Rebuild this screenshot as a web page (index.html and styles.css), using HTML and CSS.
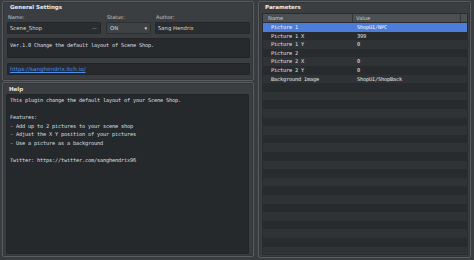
FILE: index.html
```html
<!DOCTYPE html>
<html>
<head>
<meta charset="utf-8">
<link rel="stylesheet" href="styles.css">
</head>
<body>
<div class="app">
  <div class="left">
    <section class="panel general">
      <div class="title">General Settings</div>
      <div class="fields">
        <div class="field f-name">
          <div class="label">Name:</div>
          <div class="input"><span>Scene_Shop</span><span class="dash">—</span></div>
        </div>
        <div class="field f-status">
          <div class="label">Status:</div>
          <div class="select"><span>ON</span><span class="arrow">▾</span></div>
        </div>
        <div class="field f-author">
          <div class="label">Author:</div>
          <div class="input"><span>Sang Hendrix</span></div>
        </div>
      </div>
      <div class="desc mono">Ver.1.0 Change the default layout of Scene Shop.</div>
      <div class="url"><a>https://sanghendrix.itch.io/</a></div>
    </section>
    <section class="panel help">
      <div class="title">Help</div>
      <div class="helptext mono">This plugin change the default layout of your Scene Shop.

Features:
- Add up to 2 pictures to your scene shop
- Adjust the X Y position of your pictures
- Use a picture as a background

Twitter: https://twitter.com/sanghendrix96</div>
    </section>
  </div>
  <section class="panel params">
    <div class="title">Parameters</div>
    <div class="table">
      <div class="thead">
        <div class="th c-name">Name</div>
        <div class="th c-value">Value</div>
        <div class="th c-end"></div>
      </div>
      <div class="tbody mono">
        <div class="row sel"><div class="c-name">Picture 1</div><div class="c-value">ShopUI/NPC</div></div>
        <div class="row"><div class="c-name">Picture 1 X</div><div class="c-value">399</div></div>
        <div class="row"><div class="c-name">Picture 1 Y</div><div class="c-value">0</div></div>
        <div class="row"><div class="c-name">Picture 2</div><div class="c-value"></div></div>
        <div class="row"><div class="c-name">Picture 2 X</div><div class="c-value">0</div></div>
        <div class="row"><div class="c-name">Picture 2 Y</div><div class="c-value">0</div></div>
        <div class="row"><div class="c-name">Background Image</div><div class="c-value">ShopUI/ShopBack</div></div>
      </div>
    </div>
  </section>
</div>
</body>
</html>
```

FILE: styles.css
```css
* { box-sizing: border-box; }
html, body { margin: 0; padding: 0; }
body {
  width: 474px;
  height: 260px;
  background: #3a3d40;
  font-family: "DejaVu Sans", "Noto Sans", sans-serif;
  color: #d8dadc;
  overflow: hidden;
}
.mono {
  font-family: "DejaVu Sans Mono", "Liberation Mono", monospace;
  font-size: 5.3px;
  letter-spacing: -0.19px;
}
.app {
  display: flex;
  gap: 4px;
  padding: 1px 3px 0 2px;
  height: 260px;
}
.left {
  width: 252px;
  display: flex;
  flex-direction: column;
  gap: 1px;
}
.panel {
  border: 1px solid #5a5d60;
  border-radius: 2px;
  background: #3b3e41;
  box-shadow: inset 0 0 0 1px #333639;
}
.title {
  height: 10px;
  line-height: 10px;
  font-size: 5.5px;
  font-weight: bold;
  color: #e8eaec;
  padding-left: 3px;
}
.general {
  height: 80px;
  padding: 0 3px 5px 4px;
}
.fields {
  display: flex;
  height: 22px;
}
.field { display: flex; flex-direction: column; }
.f-name { width: 94px; margin-right: 5px; }
.f-status { width: 45px; margin-right: 4px; }
.f-author { width: 95px; }
.label {
  height: 10px;
  line-height: 11px;
  font-size: 5px;
  color: #c8cacc;
  padding-left: 1px;
}
.input, .select {
  height: 12px;
  display: flex;
  align-items: center;
  justify-content: space-between;
  font-size: 5.3px;
  line-height: 9px;
  padding: 0 3px 0 2px;
  border-radius: 1px;
}
.input {
  background: #2a2d30;
  border: 1px solid #25272a;
}
.select {
  background: #3f4245;
  border: 1px solid #2c2f32;
  padding-left: 3px;
}
.dash { color: #9a9c9e; font-size: 5px; }
.arrow { font-size: 5px; color: #e0e0e0; }
.desc {
  margin-top: 4px;
  height: 20px;
  background: #27292c;
  border: 1px solid #222427;
  border-radius: 1px;
  padding: 2px 2px;
  line-height: 8px;
  color: #dcdee0;
}
.url {
  margin-top: 5px;
  height: 12px;
  background: #27292c;
  border: 1px solid #222427;
  border-radius: 1px;
  display: flex;
  align-items: center;
  padding-left: 2px;
  font-size: 5.6px;
}
.url a {
  color: #4f8ee6;
  text-decoration: underline;
}
.help {
  height: 175px;
  padding: 0 4px 2px 3px;
}
.help .title {
  height: 11px;
  line-height: 12px;
}
.helptext {
  height: 160px;
  background: #26292c;
  border: 1px solid #222427;
  border-radius: 1px;
  padding: 1px 3px;
  line-height: 8.6px;
  white-space: pre;
  color: #dcdee0;
}
.params {
  flex: 1;
  height: 257px;
  padding: 0 2px 2px 3px;
}
.params .title { height: 11px; line-height: 11px; }
.table {
  height: 242px;
  display: flex;
  flex-direction: column;
  border: 1px solid #2a2c2f;
  background: #2b2e31;
}
.thead {
  height: 9px;
  display: flex;
  background: #4d5053;
  border-bottom: 1px solid #2a2c2f;
  font-size: 5.2px;
  color: #c6c8ca;
  line-height: 8px;
}
.th.c-name { width: 90px; padding-left: 5px; border-right: 1px solid #35383b; }
.th.c-value { width: 108px; padding-left: 3px; border-right: 1px solid #35383b; }
.th.c-end { flex: 1; }
.tbody {
  flex: 1;
  background: repeating-linear-gradient(#303336 0 8.6px, #282b2e 8.6px 17.2px);
}
.row {
  height: 8.6px;
  display: flex;
  line-height: 8.6px;
  color: #e0e2e4;
}
.row.sel {
  background: #4c7dd8;
  color: #f4f6ff;
}
.row .c-name { width: 90px; padding-left: 8px; }
.row .c-value { padding-left: 4px; }
```
